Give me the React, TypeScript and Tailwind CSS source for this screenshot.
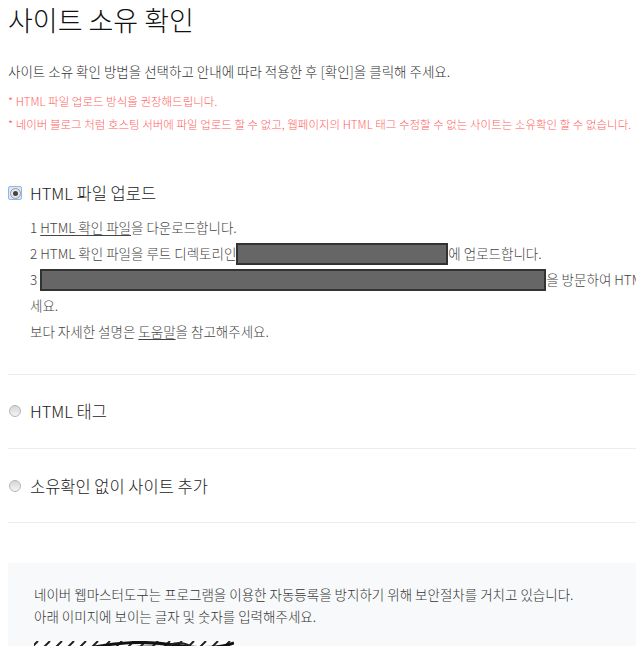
import React from 'react';

const font = { fontFamily: '"Noto Sans CJK KR", "Liberation Sans", sans-serif' };

function Radio({ checked }: { checked?: boolean }) {
  if (checked) {
    return (
      <span className="inline-flex items-center justify-center w-[14px] h-[14px] rounded-[2px] border border-[#8fb8ea] bg-[#dbe8f8] shrink-0">
        <span className="flex items-center justify-center w-[11px] h-[11px] rounded-full border border-[#9a9a9a] bg-[#e6e6e6]">
          <span className="w-[5px] h-[5px] rounded-full bg-[#444]" />
        </span>
      </span>
    );
  }
  return (
    <span className="inline-flex items-center justify-center w-[14px] h-[14px] shrink-0">
      <span className="w-[12px] h-[12px] rounded-full border border-[#b5b5b5] bg-[linear-gradient(#d6d6d6,#f4f4f4)]" />
    </span>
  );
}

function Redact({ width }: { width: number }) {
  return (
    <span
      className="inline-block align-middle h-[22px] bg-[#666] border-2 border-[#333] -mt-[3px]"
      style={{ width }}
    />
  );
}

export default function App() {
  return (
    <div className="w-full overflow-hidden bg-white text-[#222] font-light" style={font}>
      <div className="w-[940px] pl-2">
        <h1 className="text-[27px] leading-[40px] font-light text-[#111]">사이트 소유 확인</h1>
        <p className="mt-[21px] text-[13.5px] leading-[20px] text-[#333]">
          사이트 소유 확인 방법을 선택하고 안내에 따라 적용한 후 [확인]을 클릭해 주세요.
        </p>
        <ul className="mt-[9px] text-[11.5px] leading-[23px] text-[#ff5f5f]">
          <li>* HTML 파일 업로드 방식을 권장해드립니다.</li>
          <li>
            * 네이버 블로그 처럼 호스팅 서버에 파일 업로드 할 수 없고, 웹페이지의 HTML 태그 수정할 수 없는 사이트는 소유확인 할 수 없습니다.
          </li>
        </ul>

        {/* HTML 파일 업로드 */}
        <div className="mt-[45px] pb-[30px] border-b border-[#ececec]">
          <label className="flex items-center gap-[8px] text-[16.5px] leading-[24px] text-[#222]">
            <Radio checked />
            HTML 파일 업로드
          </label>
          <div className="mt-[9px] pl-[22px] text-[13.5px] leading-[26px] text-[#444]">
            <p>
              1 <span className="underline underline-offset-2">HTML 확인 파일</span>을 다운로드합니다.
            </p>
            <p className="whitespace-nowrap">
              2 HTML 확인 파일을 루트 디렉토리인<Redact width={212} />에 업로드합니다.
            </p>
            <p className="whitespace-nowrap">
              3 <Redact width={506} />을 방문하여 HTML 확인 파일이 정상적으로 업로드 되었는지 확인하
            </p>
            <p>세요.</p>
            <p>
              보다 자세한 설명은 <span className="underline underline-offset-2">도움말</span>을 참고해주세요.
            </p>
          </div>
        </div>

        {/* HTML 태그 */}
        <div className="pt-[24px] pb-[25px] border-b border-[#ececec]">
          <label className="flex items-center gap-[8px] text-[16.5px] leading-[24px] text-[#222]">
            <Radio />
            HTML 태그
          </label>
        </div>

        {/* 소유확인 없이 */}
        <div className="pt-[25px] pb-[24px] border-b border-[#ececec]">
          <label className="flex items-center gap-[8px] text-[16.5px] leading-[24px] text-[#222]">
            <Radio />
            소유확인 없이 사이트 추가
          </label>
        </div>

        {/* 보안절차 */}
        <div className="mt-[40px] bg-[#f8f9fa] pl-[26px] pt-[20px] pb-[30px]">
          <p className="text-[13.5px] leading-[22px] text-[#333]">
            네이버 웹마스터도구는 프로그램을 이용한 자동등록을 방지하기 위해 보안절차를 거치고 있습니다.
          </p>
          <p className="text-[13.5px] leading-[22px] text-[#333]">아래 이미지에 보이는 글자 및 숫자를 입력해주세요.</p>
          <div className="mt-[14px] w-[200px] h-[60px] bg-white overflow-hidden">
            <svg width="200" height="60" viewBox="0 0 200 60">
              {Array.from({ length: 18 }).map((_, i) => (
                <path
                  key={i}
                  d={`M${i * 12 - 10} 14 L${i * 12 + 4} 0`}
                  stroke="#222"
                  strokeWidth="2"
                />
              ))}
              <path d="M60 6 Q100 -2 140 4 T200 2" stroke="#111" strokeWidth="3" fill="none" />
              <path d="M70 10 Q110 2 150 8 T200 6" stroke="#333" strokeWidth="2" fill="none" />
              <ellipse cx="145" cy="8" rx="12" ry="6" stroke="#222" strokeWidth="2" fill="none" />
            </svg>
          </div>
        </div>
      </div>
    </div>
  );
}
